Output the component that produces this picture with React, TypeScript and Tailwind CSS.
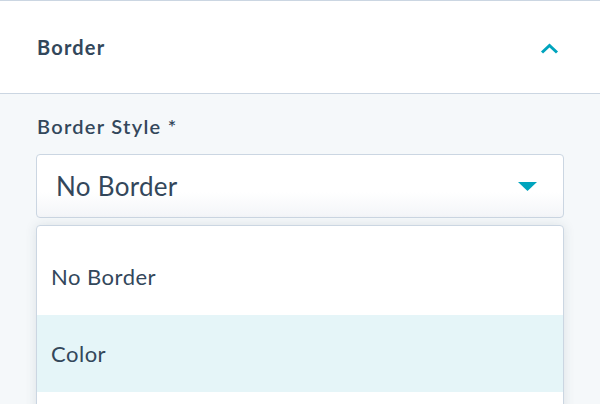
export default function App() {
  return (
    <div className="h-[404px] w-[600px] overflow-hidden bg-[#f5f8fa] font-['Lato',sans-serif] text-[#33475b]">
      {/* section header */}
      <div className="flex h-[94px] items-center justify-between border-y border-[#cbd6e2] bg-white pl-[37px] pr-[41px]">
        <span className="text-[20px] font-bold leading-none tracking-[1.2px]">Border</span>
        <svg width="19" height="11" viewBox="0 0 19 11" className="mt-[2px]">
          <path d="M2 9.5 L9.5 2.5 L17 9.5" fill="none" stroke="#00a4bd" strokeWidth="3" />
        </svg>
      </div>

      <div className="px-[36px] pt-[20px]">
        <label className="block pl-[1px] text-[20px] font-semibold leading-[24px] tracking-[1.3px]">
          Border Style *
        </label>

        {/* select */}
        <div className="mt-[16px] flex h-[64px] items-center justify-between rounded-[4px] border border-[#cbd6e2] bg-gradient-to-b from-white from-60% to-[#f3f5f8] pl-[19px] pr-[26px]">
          <span className="text-[26px] leading-none tracking-[0.3px]">No Border</span>
          <svg width="19" height="9" viewBox="0 0 19 9">
            <path d="M0 0 H19 L9.5 9 Z" fill="#00a4bd" />
          </svg>
        </div>

        {/* menu */}
        <div className="mt-[7px] rounded-t-[4px] border border-[#cbd6e2] bg-white pt-[12px] shadow-[0_0_12px_rgba(45,62,80,0.12)]">
          <div className="flex h-[77px] items-center pl-[14px] text-[22px] tracking-[0.5px]">No Border</div>
          <div className="flex h-[77px] items-center bg-[#e5f5f8] pl-[14px] text-[22px] tracking-[0.5px]">Color</div>
          <div className="h-[77px]" />
        </div>
      </div>
    </div>
  );
}
